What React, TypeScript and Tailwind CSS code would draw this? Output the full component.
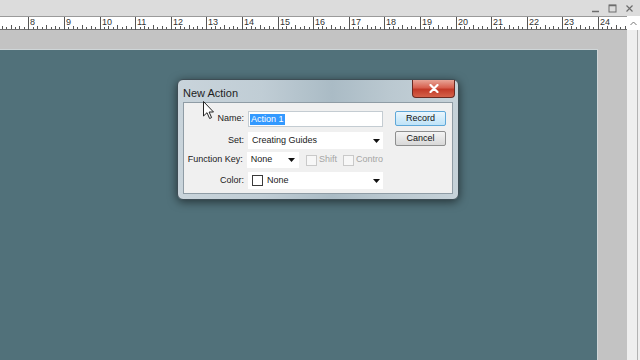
import React from 'react';

const font = "font-['Liberation_Sans',Arial,sans-serif]";

const Ruler: React.FC = () => {
    const majors: number[] = [];
    for (let k = -1; k <= 17; k++) majors.push(28.3 + 35.6 * k);
    return (
        <svg width="627" height="14" className="block">
            <rect x="0" y="0" width="627" height="14" fill="#ffffff" />
            <line x1="0" y1="0.5" x2="627" y2="0.5" stroke="#9a9a9a" />
            <line x1="0" y1="13.5" x2="627" y2="13.5" stroke="#6e6e6e" />
            {majors.map((mx, idx) => (
                <g key={idx}>
                    <line x1={Math.round(mx) + 0.5} y1="1" x2={Math.round(mx) + 0.5} y2="14" stroke="#555" />
                    {[1, 2, 3, 4, 5, 6, 7].map((i) => {
                        const x = Math.round(mx + i * 4.45) + 0.5;
                        const len = i === 4 ? 4 : i % 2 === 0 ? 3 : 2;
                        return <line key={i} x1={x} y1={13 - len} x2={x} y2="13" stroke="#555" />;
                    })}
                    {idx > 0 && idx <= 17 && (
                        <text x={Math.round(mx) + 2} y="9" fontSize="9" fill="#333" fontFamily="Liberation Sans, Arial, sans-serif">
                            {idx + 7}
                        </text>
                    )}
                </g>
            ))}
        </svg>
    );
};

const Arrow: React.FC = () => (
    <svg width="7" height="4" viewBox="0 0 7 4" className="block">
        <path d="M0 0 L7 0 L3.5 4 Z" fill="#111" />
    </svg>
);

const Check: React.FC<{ label: string }> = ({ label }) => (
    <div className="flex items-center gap-[2px]">
        <span className="w-[11px] h-[11px] border border-[#c9c9c9] bg-[#f7f7f7]" />
        <span className="text-[#a5a5a5]">{label}</span>
    </div>
);

const Label: React.FC<{ text: string }> = ({ text }) => (
    <span className="w-[61px] text-right pr-[1px] text-[#1a1a1a] whitespace-nowrap">{text}</span>
);

const NewActionDialog: React.FC = () => (
    <div className="absolute left-[177px] top-[79px] w-[282px] h-[121px] rounded-[6px] border border-[#3e4d55] shadow-[0_2px_10px_rgba(0,0,0,0.55)] bg-[linear-gradient(90deg,#c9d4db_0%,#c0cdd5_30%,#aabbc5_55%,#bac8d0_75%,#c6d2d9_100%)] flex flex-col">
        <div className="h-[21px] flex items-start justify-between pl-[5px]">
            <span className={`${font} text-[11px] text-[#1e1e1e] mt-[5px]`}>New Action</span>
            <div className="w-[43px] h-[18px] mr-[3px] rounded-b-[4px] border border-t-0 border-[#6a2a22] bg-[linear-gradient(180deg,#e8a597_0%,#d7604f_45%,#c23a28_55%,#d4614a_100%)] flex items-center justify-center">
                <svg width="10" height="9" viewBox="0 0 10 9">
                    <path d="M1.5 1 L8.5 8 M8.5 1 L1.5 8" stroke="#ffffff" strokeWidth="2.2" strokeLinecap="round" />
                </svg>
            </div>
        </div>
        <div className={`${font} text-[9px] ml-[5px] mt-[1px] w-[270px] h-[92px] border border-[#8f9ca5] bg-[#f0f0f0] flex`}>
            <div className="flex flex-col w-[199px] pt-[8px]">
                <div className="flex items-center gap-[3px] h-[16px]">
                    <Label text="Name:" />
                    <div className="w-[135px] h-[16px] bg-white border border-[#c4ccd2] flex items-center pl-[1px]">
                        <span className="bg-[#3399ff] text-white px-[1px] leading-[11px]">Action 1</span>
                    </div>
                </div>
                <div className="flex items-center gap-[3px] h-[17px] mt-[5px]">
                    <Label text="Set:" />
                    <div className="w-[135px] h-[17px] bg-white flex items-center justify-between pl-[4px] pr-[3px]">
                        <span className="text-[#1a1a1a]">Creating Guides</span>
                        <Arrow />
                    </div>
                </div>
                <div className="flex items-center gap-[3px] h-[16px] mt-[3px]">
                    <Label text="Function Key:" />
                    <div className="w-[53px] h-[16px] bg-white flex items-center justify-between pl-[4px] pr-[4px]">
                        <span className="text-[#1a1a1a]">None</span>
                        <Arrow />
                    </div>
                    <div className="flex items-center gap-[6px] ml-[4px] whitespace-nowrap">
                        <Check label="Shift" />
                        <Check label="Contro" />
                    </div>
                </div>
                <div className="flex items-center gap-[3px] h-[17px] mt-[4px]">
                    <Label text="Color:" />
                    <div className="w-[135px] h-[17px] bg-white flex items-center justify-between pl-[4px] pr-[3px]">
                        <div className="flex items-center gap-[4px]">
                            <span className="w-[11px] h-[11px] border border-[#3a3a3a] bg-white" />
                            <span className="text-[#1a1a1a]">None</span>
                        </div>
                        <Arrow />
                    </div>
                </div>
            </div>
            <div className="flex flex-col ml-[12px] pt-[8px] gap-[5px]">
                <button className="w-[51px] h-[15px] rounded-[2px] border border-[#5fa8d8] bg-[linear-gradient(180deg,#eaf6fd_0%,#d3ecfa_50%,#bfe3f8_100%)] text-[#111] leading-none">
                    Record
                </button>
                <button className="w-[51px] h-[15px] rounded-[2px] border border-[#8e8f8f] bg-[linear-gradient(180deg,#f4f4f4_0%,#e6e6e6_50%,#d8d8d8_100%)] text-[#111] leading-none">
                    Cancel
                </button>
            </div>
        </div>
    </div>
);

const Cursor: React.FC = () => (
    <svg className="absolute left-[203px] top-[101px]" width="12" height="19" viewBox="0 0 12 19">
        <path d="M0.5 0.5 L0.5 15 L4 11.7 L6.6 17.5 L8.6 16.6 L6.1 11 L10.5 11 Z" fill="#ffffff" stroke="#222" strokeWidth="1" strokeLinejoin="round" />
    </svg>
);

export default function App() {
    return (
        <div className="relative w-[640px] h-[360px] overflow-hidden bg-[#dcdcdc] flex flex-col">
            <div className="h-[16px] flex items-center justify-end gap-[8px] pr-[6px]">
                <svg width="9" height="9" viewBox="0 0 9 9"><path d="M1 7.5 H8" stroke="#6d6d6d" strokeWidth="1.5" /></svg>
                <svg width="9" height="9" viewBox="0 0 9 9"><rect x="1" y="1" width="7" height="7" fill="none" stroke="#6d6d6d" strokeWidth="1" /><path d="M1 1.5 H8" stroke="#6d6d6d" strokeWidth="1.5" /></svg>
                <svg width="9" height="9" viewBox="0 0 9 9"><path d="M1.5 1.5 L7.5 7.5 M7.5 1.5 L1.5 7.5" stroke="#6d6d6d" strokeWidth="1.2" /></svg>
            </div>
            <div className="flex flex-1">
                <div className="w-[627px] flex flex-col">
                    <Ruler />
                    <div className="flex-1 bg-[#c3c3c3] pt-[19px] pr-[29px] flex">
                        <div className="flex-1 bg-[#51717a] border-t border-r border-[#cfd6d8]" />
                    </div>
                </div>
                <div className="flex-1 flex flex-col bg-[#efefef]">
                    <div className="h-[14px] bg-white flex items-center justify-center">
                        <svg width="7" height="5" viewBox="0 0 7 5"><path d="M0.5 4 L3.5 1 L6.5 4" fill="none" stroke="#777" strokeWidth="1" /></svg>
                    </div>
                    <div className="flex-1 flex justify-end pr-[2px]">
                        <div className="w-[1px] bg-[#b3b3b3]" />
                    </div>
                </div>
            </div>
            <NewActionDialog />
            <Cursor />
        </div>
    );
}
